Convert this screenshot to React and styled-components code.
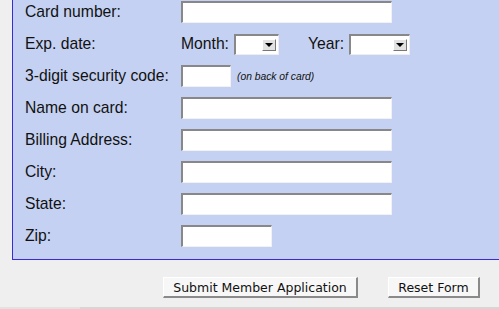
import React from 'react';
import styled, { createGlobalStyle } from 'styled-components';

const Global = createGlobalStyle`
  html, body { margin: 0; padding: 0; background: #efefef; overflow: hidden; }
  body { width: 499px; height: 309px; font-family: "Liberation Sans", Arial, Helvetica, sans-serif; }
`;

const Page = styled.div`
  height: 309px;
  display: flex;
  flex-direction: column;
  overflow: hidden;
`;

const Panel = styled.div`
  margin-left: 12px;
  width: 520px;
  flex-shrink: 0;
  box-sizing: border-box;
  background: #c5d1f2;
  border-left: 1px solid #3b2bd6;
  border-bottom: 1px solid #3b2bd6;
  padding: 1px 0 12px 12px;
  display: flex;
  flex-direction: column;
  gap: 10px;
`;

const Row = styled.div`
  display: flex;
  align-items: center;
  height: 22px;
`;

const Label = styled.div`
  width: 156px;
  flex-shrink: 0;
  font-size: 15.7px;
  color: #111;
  margin-top: -1px;
  white-space: nowrap;
`;

const Inline = styled.span`
  font-size: 15.7px;
  color: #111;
  margin-right: ${p => p.$mr || 0}px;
  margin-left: ${p => p.$ml || 0}px;
  white-space: nowrap;
`;

const Field = styled.div`
  width: ${p => p.$w}px;
  height: 22px;
  flex-shrink: 0;
  box-sizing: border-box;
  background: #fff;
  border-top: 2px solid #888;
  border-left: 2px solid #888;
  border-right: 1px solid #f2f2f2;
  border-bottom: 1px solid #f2f2f2;
`;

const Note = styled.span`
  font-size: 10.3px;
  font-style: italic;
  color: #111;
  margin-left: 6px;
  white-space: nowrap;
`;

const Select = styled.div`
  width: ${p => p.$w}px;
  height: 21px;
  flex-shrink: 0;
  box-sizing: border-box;
  background: #fff;
  border-top: 2px solid #888;
  border-left: 2px solid #888;
  border-right: 1px solid #eee;
  border-bottom: 1px solid #eee;
  display: flex;
  justify-content: flex-end;
  align-items: center;
  padding-right: 2px;
`;

const ArrowBox = styled.div`
  width: 14px;
  height: 12px;
  box-sizing: border-box;
  background: #e2e2e2;
  border-top: 1px solid #fff;
  border-left: 1px solid #fff;
  border-right: 1px solid #777;
  border-bottom: 1px solid #777;
  display: flex;
  align-items: center;
  justify-content: center;
`;

const Tri = styled.div`
  width: 0;
  height: 0;
  border-left: 4px solid transparent;
  border-right: 4px solid transparent;
  border-top: 4px solid #000;
`;

const Buttons = styled.div`
  display: flex;
  gap: 30px;
  padding-left: 163px;
  margin-top: 17px;
`;

const Button = styled.button`
  height: 21px;
  width: ${p => p.$w}px;
  box-sizing: border-box;
  padding: 0;
  background: #f7f7f7;
  border-top: 1px solid #fff;
  border-left: 1px solid #fff;
  border-right: 2px solid #8a8a8a;
  border-bottom: 2px solid #8a8a8a;
  font-family: "DejaVu Sans", Verdana, sans-serif;
  font-size: 12.5px;
  color: #111;
  line-height: 17px;
  white-space: nowrap;
`;

const Footer = styled.div`
  margin-top: auto;
  height: 2px;
  display: flex;
`;

const FooterPart = styled.div`
  height: 2px;
  background: ${p => p.$c};
  width: ${p => p.$w};
`;

const DropDown = ({ w }) => (
  <Select $w={w}>
    <ArrowBox><Tri /></ArrowBox>
  </Select>
);

export default function App() {
  return (
    <>
      <Global />
      <Page>
        <Panel>
          <Row><Label>Card number:</Label><Field $w={211} /></Row>
          <Row>
            <Label>Exp. date:</Label>
            <Inline $mr={5}>Month:</Inline>
            <DropDown w={45} />
            <Inline $ml={29} $mr={5}>Year:</Inline>
            <DropDown w={61} />
          </Row>
          <Row><Label>3-digit security code:</Label><Field $w={50} /><Note>(on back of card)</Note></Row>
          <Row><Label>Name on card:</Label><Field $w={211} /></Row>
          <Row><Label>Billing Address:</Label><Field $w={211} /></Row>
          <Row><Label>City:</Label><Field $w={211} /></Row>
          <Row><Label>State:</Label><Field $w={211} /></Row>
          <Row><Label>Zip:</Label><Field $w={91} /></Row>
        </Panel>
        <Buttons>
          <Button $w={195}>Submit Member Application</Button>
          <Button $w={92}>Reset Form</Button>
        </Buttons>
        <Footer>
          <FooterPart $c="#e2e2e2" $w="80px" />
          <FooterPart $c="#d6d6d6" $w="419px" />
        </Footer>
      </Page>
    </>
  );
}
